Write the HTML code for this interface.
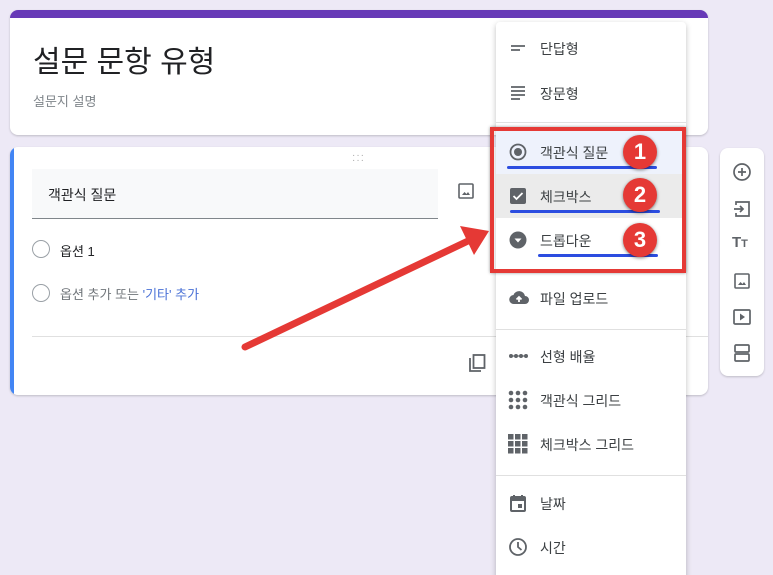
<!DOCTYPE html>
<html><head><meta charset="utf-8"><style>
*{margin:0;padding:0;box-sizing:border-box}
html,body{width:773px;height:575px;overflow:hidden}
body{background:#ede9f6;position:relative;font-family:"Liberation Sans","Noto Sans CJK KR",sans-serif;color:#202124}
.card{position:absolute;background:#fff;border-radius:8px;box-shadow:0 1px 2px rgba(0,0,0,.2)}
.abs{position:absolute}
.mi{position:absolute;left:0;width:190px;height:44px;font-size:14px;color:#3c4043}
.mi span{position:absolute;left:44px;top:13px}
.mi svg{position:absolute;left:12px;top:12px}
.hr{position:absolute;left:0;width:190px;height:1px;background:#e0e0e0}
.num{position:absolute;width:34px;height:34px;border-radius:50%;background:#e53935;color:#fff;font-weight:bold;font-size:22px;text-align:center;line-height:33px;box-shadow:0 1px 3px rgba(0,0,0,.5)}
.ul{position:absolute;height:3px;background:#2c4de0;border-radius:2px}
</style></head><body>
<div class="card" style="left:10px;top:10px;width:698px;height:125px;overflow:hidden">
 <div class="abs" style="left:0;top:0;width:100%;height:8px;background:#673ab7"></div>
 <div class="abs" style="left:23px;top:27px;font-size:30px">설문 문항 유형</div>
 <div class="abs" style="left:23px;top:81px;font-size:13px;color:#80868b">설문지 설명</div>
</div>
<div class="card" style="left:10px;top:147px;width:698px;height:248px;overflow:hidden">
 <div class="abs" style="left:0;top:0;width:4px;height:100%;background:#4285f4"></div>
 <div class="abs" style="left:342px;top:6px;color:#aaa;font-size:10px;letter-spacing:1px;line-height:5px">···<br>···</div>
 <div class="abs" style="left:22px;top:22px;width:406px;height:50px;background:#f8f9fa;border-bottom:1px solid #80868b"></div>
 <div class="abs" style="left:38px;top:38px;font-size:14px">객관식 질문</div>
 <svg class="abs" style="left:447px;top:35px" width="18" height="18" viewBox="0 0 18 18"><rect x="2" y="2" width="14" height="14" rx="1" fill="none" stroke="#5f6368" stroke-width="1.6"/><path d="M5 13l2.5-3 2 2 1.5-2 2 3z" fill="#5f6368"/></svg>
 <div class="abs" style="left:22px;top:93px;width:18px;height:18px;border:1.5px solid #9aa0a6;border-radius:50%"></div>
 <div class="abs" style="left:50px;top:94px;font-size:13px">옵션 1</div>
 <div class="abs" style="left:22px;top:137px;width:18px;height:18px;border:1.5px solid #9aa0a6;border-radius:50%"></div>
 <div class="abs" style="left:50px;top:137px;font-size:13px;color:#70757a">옵션 추가 또는 <span style="color:#4a71d6">'기타' 추가</span></div>
 <div class="abs" style="left:22px;top:189px;width:680px;height:1px;background:#e0e0e0"></div>
 <svg class="abs" style="left:457px;top:206px" width="20" height="20" viewBox="0 0 20 20"><path d="M3 5v13h11" fill="none" stroke="#5f6368" stroke-width="1.8"/><rect x="6.5" y="2" width="11" height="13" fill="none" stroke="#5f6368" stroke-width="1.8"/></svg>
</div>
<div class="card" style="left:720px;top:148px;width:44px;height:228px">
 <svg class="abs" style="left:12px;top:14px" width="20" height="20" viewBox="0 0 20 20"><circle cx="10" cy="10" r="8" fill="none" stroke="#5f6368" stroke-width="1.7"/><path d="M10 6v8M6 10h8" stroke="#5f6368" stroke-width="1.7"/></svg>
 <svg class="abs" style="left:12px;top:51px" width="20" height="20" viewBox="0 0 20 20"><path d="M4 6V3h13v14H4v-3" fill="none" stroke="#5f6368" stroke-width="1.7"/><path d="M2 10h9M8 7l3 3-3 3" fill="none" stroke="#5f6368" stroke-width="1.7"/></svg>
 <div class="abs" style="left:12px;top:86px;font-size:15px;font-weight:bold;color:#5f6368">T<span style="font-size:11px">T</span></div>
 <svg class="abs" style="left:13px;top:124px" width="18" height="18" viewBox="0 0 18 18"><rect x="2" y="2" width="14" height="14" rx="1" fill="none" stroke="#5f6368" stroke-width="1.6"/><path d="M5 13l2.5-3 2 2 1.5-2 2 3z" fill="#5f6368"/></svg>
 <svg class="abs" style="left:12px;top:160px" width="20" height="18" viewBox="0 0 20 18"><rect x="2" y="2" width="16" height="14" rx="1" fill="none" stroke="#5f6368" stroke-width="1.7"/><path d="M8 5.5v7l5-3.5z" fill="#5f6368"/></svg>
 <svg class="abs" style="left:12px;top:195px" width="20" height="20" viewBox="0 0 20 20"><rect x="3" y="2" width="14" height="7" rx="1" fill="none" stroke="#5f6368" stroke-width="1.7"/><rect x="3" y="11" width="14" height="7" rx="1" fill="none" stroke="#5f6368" stroke-width="1.7"/></svg>
</div>
<div class="abs" style="left:496px;top:22px;width:190px;height:560px;background:#fff;box-shadow:0 2px 6px rgba(0,0,0,.25);border-radius:4px">
 <div class="mi" style="top:4px"><svg width="20" height="20" viewBox="0 0 20 20"><path d="M3 8h14M3 12h9" stroke="#5f6368" stroke-width="1.8"/></svg><span>단답형</span></div>
 <div class="mi" style="top:49px"><svg width="20" height="20" viewBox="0 0 20 20"><path d="M3 4h14M3 8h14M3 12h14M3 16h9" stroke="#5f6368" stroke-width="1.8"/></svg><span>장문형</span></div>
 <div class="hr" style="top:100px"></div>
 <div class="mi" style="top:108px;background:#eef2fc"><svg width="20" height="20" viewBox="0 0 20 20"><circle cx="10" cy="10" r="7.5" fill="none" stroke="#5f6368" stroke-width="1.8"/><circle cx="10" cy="10" r="4" fill="#5f6368"/></svg><span>객관식 질문</span></div>
 <div class="mi" style="top:152px;background:#ebebeb"><svg width="20" height="20" viewBox="0 0 20 20"><rect x="2" y="2" width="16" height="16" rx="2" fill="#5f6368"/><path d="M5.5 10l3 3 6-6" fill="none" stroke="#fff" stroke-width="1.8"/></svg><span>체크박스</span></div>
 <div class="mi" style="top:196px"><svg width="20" height="20" viewBox="0 0 20 20"><circle cx="10" cy="10" r="8.5" fill="#5f6368"/><path d="M6.5 8.5h7L10 12.5z" fill="#fff"/></svg><span>드롭다운</span></div>
 <div class="mi" style="top:254px"><svg width="22" height="20" viewBox="0 0 22 20"><path d="M6 16h11a4 4 0 0 0 0-8 6 6 0 0 0-11.5-1A4.5 4.5 0 0 0 6 16z" fill="#5f6368"/><path d="M11 14V9M8.5 11.5L11 9l2.5 2.5" fill="none" stroke="#fff" stroke-width="1.8"/></svg><span>파일 업로드</span></div>
 <div class="hr" style="top:307px"></div>
 <div class="mi" style="top:312px"><svg width="20" height="20" viewBox="0 0 20 20"><path d="M2 10h16" stroke="#5f6368" stroke-width="1.2"/><circle cx="3" cy="10" r="2" fill="#5f6368"/><circle cx="8" cy="10" r="2" fill="#5f6368"/><circle cx="13" cy="10" r="2" fill="#5f6368"/><circle cx="18" cy="10" r="2" fill="#5f6368"/></svg><span>선형 배율</span></div>
 <div class="mi" style="top:356px"><svg width="20" height="20" viewBox="0 0 20 20" fill="#5f6368"><circle cx="3" cy="3" r="2.3"/><circle cx="10" cy="3" r="2.3"/><circle cx="17" cy="3" r="2.3"/><circle cx="3" cy="10" r="2.3"/><circle cx="10" cy="10" r="2.3"/><circle cx="17" cy="10" r="2.3"/><circle cx="3" cy="17" r="2.3"/><circle cx="10" cy="17" r="2.3"/><circle cx="17" cy="17" r="2.3"/></svg><span>객관식 그리드</span></div>
 <div class="mi" style="top:400px"><svg width="20" height="20" viewBox="0 0 20 20" fill="#5f6368"><rect x="0" y="0" width="5.5" height="5.5"/><rect x="7" y="0" width="5.5" height="5.5"/><rect x="14" y="0" width="5.5" height="5.5"/><rect x="0" y="7" width="5.5" height="5.5"/><rect x="7" y="7" width="5.5" height="5.5"/><rect x="14" y="7" width="5.5" height="5.5"/><rect x="0" y="14" width="5.5" height="5.5"/><rect x="7" y="14" width="5.5" height="5.5"/><rect x="14" y="14" width="5.5" height="5.5"/></svg><span>체크박스 그리드</span></div>
 <div class="hr" style="top:453px"></div>
 <div class="mi" style="top:459px"><svg width="20" height="20" viewBox="0 0 20 20"><rect x="3" y="4" width="14" height="14" rx="1" fill="none" stroke="#5f6368" stroke-width="2"/><path d="M3 4h14v4H3z" fill="#5f6368"/><path d="M6 2v3M14 2v3" stroke="#5f6368" stroke-width="2"/><rect x="10" y="11" width="4" height="4" fill="#5f6368"/></svg><span>날짜</span></div>
 <div class="mi" style="top:503px"><svg width="20" height="20" viewBox="0 0 20 20"><circle cx="10" cy="10" r="8" fill="none" stroke="#5f6368" stroke-width="1.8"/><path d="M10 5v5l3.5 3" fill="none" stroke="#5f6368" stroke-width="1.8"/></svg><span>시간</span></div>
</div>
<div class="abs" style="left:490px;top:127px;width:196px;height:146px;border:4px solid #e53935;box-shadow:0 0 3px rgba(0,0,0,.4)"></div>
<div class="ul" style="left:507px;top:166px;width:150px"></div>
<div class="ul" style="left:510px;top:210px;width:150px"></div>
<div class="ul" style="left:538px;top:254px;width:120px"></div>
<div class="num" style="left:623px;top:135px">1</div>
<div class="num" style="left:623px;top:178px">2</div>
<div class="num" style="left:623px;top:223px">3</div>
<svg class="abs" style="left:0;top:0" width="773" height="575"><path d="M245 347L468 241" stroke="#e53935" stroke-width="7" stroke-linecap="round"/><path d="M489 231L460 226L474 255z" fill="#e53935"/></svg>
</body></html>
